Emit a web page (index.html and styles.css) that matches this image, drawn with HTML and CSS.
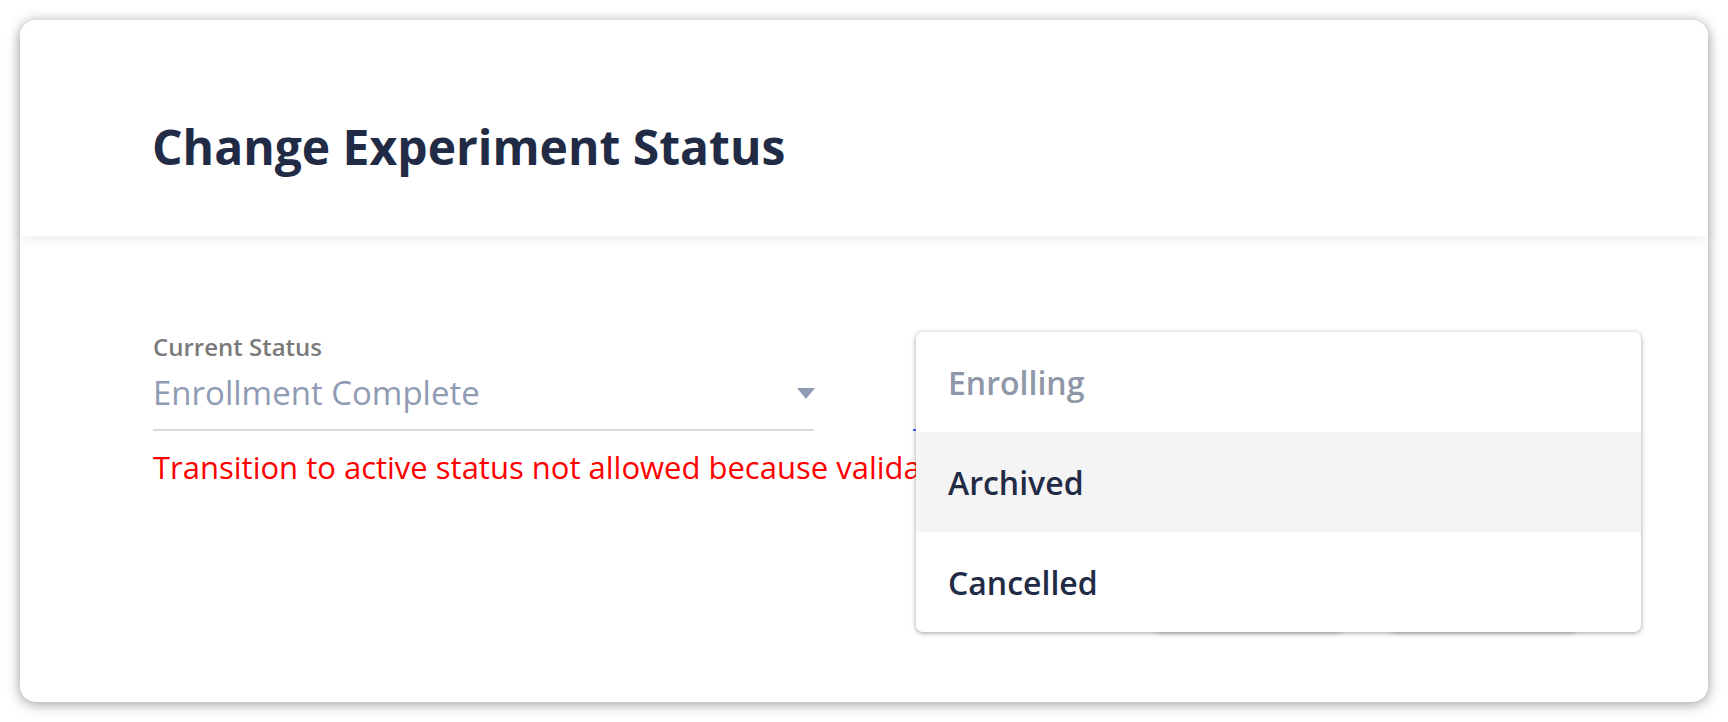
FILE: index.html
```html
<!DOCTYPE html>
<html lang="en">
<head>
<meta charset="utf-8">
<title>Change Experiment Status</title>
<link rel="stylesheet" href="styles.css">
</head>
<body>
<div class="card">
  <header class="card-header">
    <h1 class="title">Change Experiment Status</h1>
  </header>
  <section class="card-body">
    <div class="fields">
      <div class="field">
        <div class="label">Current Status</div>
        <div class="select">
          <span class="value">Enrollment Complete</span>
          <span class="caret"></span>
        </div>
      </div>
      <div class="field">
        <div class="label-gap"></div>
        <div class="select select-active">
          <span class="value-empty"></span>
          <span class="caret"></span>
        </div>
      </div>
    </div>
    <div class="error">Transition to active status not allowed because validation failed</div>
    <div class="actions">
      <span class="btn"></span>
      <span class="btn btn-primary"></span>
    </div>
  </section>
  <ul class="menu">
    <li class="menu-item disabled">Enrolling</li>
    <li class="menu-item hovered">Archived</li>
    <li class="menu-item">Cancelled</li>
  </ul>
</div>
</body>
</html>
```
FILE: styles.css
```css
* { box-sizing: border-box; }
html, body { margin: 0; padding: 0; background: #ffffff; }
body {
  padding: 20px;
  font-family: "Open Sans", "Noto Sans", sans-serif;
}
.card {
  position: relative;
  width: 1688px;
  height: 682px;
  background: #ffffff;
  border-radius: 16px;
  box-shadow: 0 2px 13px rgba(0, 0, 0, 0.4);
}
.card-header {
  position: relative;
  z-index: 1;
  height: 216px;
  padding: 95px 132px 0;
  background: #ffffff;
  border-radius: 16px 16px 0 0;
  box-shadow: 0 6px 12px -2px rgba(0, 0, 0, 0.07);
}
.title {
  margin: 0;
  font-size: 48px;
  line-height: 64px;
  font-weight: 700;
  color: #222b45;
}
.card-body {
  padding: 95px 132px 0 133px;
}
.fields {
  display: flex;
  gap: 99px;
}
.field { width: 661px; }
.label, .label-gap {
  height: 32px;
}
.label {
  font-size: 24px;
  line-height: 32px;
  font-weight: 600;
  color: #7a7a7a;
}
.select {
  display: flex;
  justify-content: space-between;
  align-items: center;
  padding: 8px 0 14px;
  border-bottom: 2px solid #dadada;
}
.select-active { border-bottom-color: #3366ff; }
.value {
  font-size: 33px;
  line-height: 44px;
  color: #8f9bb3;
}
.value-empty { height: 44px; }
.caret {
  width: 0;
  height: 0;
  border-left: 9.5px solid transparent;
  border-right: 9.5px solid transparent;
  border-top: 11px solid #8f9bb3;
  margin-right: -1px;
}
.error {
  width: 763px;
  overflow: hidden;
  margin-top: 16px;
  font-size: 31px;
  line-height: 40px;
  color: #ff0000;
  white-space: nowrap;
}
.actions {
  display: flex;
  justify-content: flex-end;
  gap: 47px;
  margin-top: 80px;
}
.btn {
  display: block;
  width: 188px;
  height: 64px;
  border-radius: 6px;
  background: #ffffff;
  box-shadow: 0 2px 4px rgba(0, 0, 0, 0.22);
}
.btn-primary { width: 186px; }
.menu {
  position: absolute;
  z-index: 2;
  left: 896px;
  top: 312px;
  width: 725px;
  margin: 0;
  padding: 0;
  list-style: none;
  background: #ffffff;
  border-radius: 7px;
  overflow: hidden;
  box-shadow: 0 1px 5px rgba(0, 0, 0, 0.38);
}
.menu-item {
  display: flex;
  align-items: center;
  height: 100px;
  padding: 0 32px;
  font-size: 32px;
  font-weight: 600;
  color: #222b45;
}
.menu-item.disabled { color: #8f97a8; }
.menu-item.hovered { background: #f4f4f4; }
```
